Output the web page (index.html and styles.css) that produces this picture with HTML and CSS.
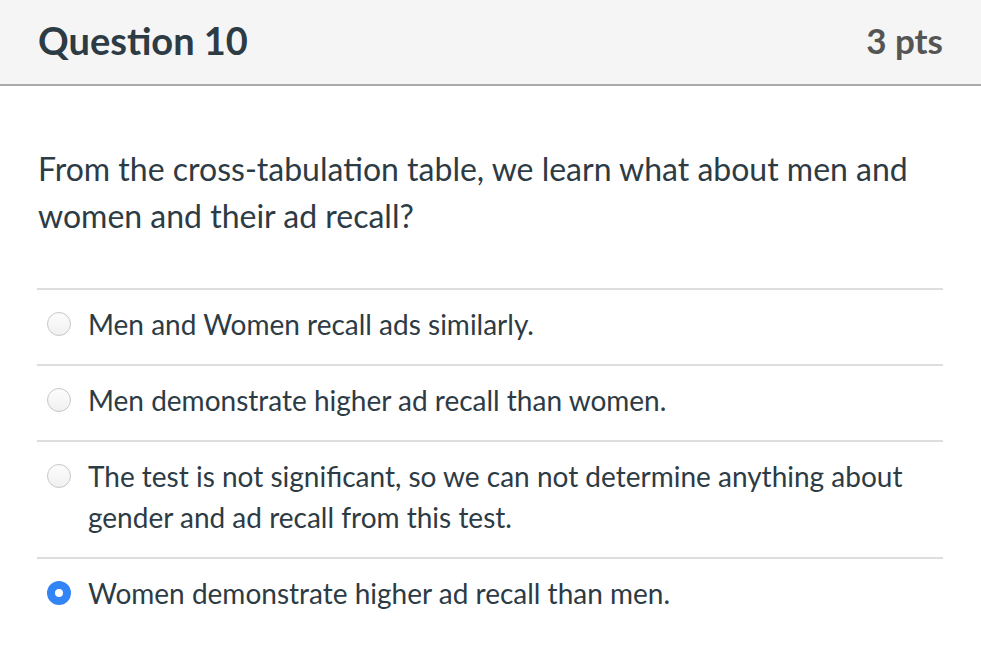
FILE: index.html
```html
<!DOCTYPE html>
<html>
<head>
<meta charset="utf-8">
<link rel="stylesheet" href="styles.css">
</head>
<body>
<div class="question">
  <div class="header">
    <h2 class="title">Question 10</h2>
    <div class="pts">3 pts</div>
  </div>
  <div class="content">
    <p class="text">From the cross-tabulation table, we learn what about men and women and their ad recall?</p>
    <div class="answers">
      <div class="answer"><span class="radio"></span><span class="label">Men and Women recall ads similarly.</span></div>
      <div class="answer"><span class="radio"></span><span class="label">Men demonstrate higher ad recall than women.</span></div>
      <div class="answer"><span class="radio"></span><span class="label">The test is not significant, so we can not determine anything about gender and ad recall from this test.</span></div>
      <div class="answer"><span class="radio checked"></span><span class="label">Women demonstrate higher ad recall than men.</span></div>
    </div>
  </div>
</div>
</body>
</html>
```
FILE: styles.css
```css
* { box-sizing: border-box; }
html, body { margin: 0; padding: 0; background: #fff; }
body { font-family: Lato, "Open Sans", sans-serif; color: #2d3b45; width: 981px; height: 658px; overflow: hidden; }
.header {
  display: flex;
  justify-content: space-between;
  align-items: center;
  height: 86px;
  padding: 0 38px 4px 38px;
  background: #f5f5f5;
  border-bottom: 2px solid #aaaaaa;
}
.title { margin: 0; font-size: 38px; font-weight: 700; color: #2d3b45; }
.pts { font-size: 35px; font-weight: 700; color: #555; }
.content { padding: 59px 38px 0 37px; }
.text { margin: 0 0 49px 1px; font-size: 32px; line-height: 47px; }
.answers { width: 906px; }
.answer {
  display: flex;
  align-items: flex-start;
  border-top: 2px solid #dddddd;
  padding: 14px 0 19px 0;
  font-size: 28px;
  line-height: 41px;
}
.radio {
  flex: none;
  width: 24px;
  height: 24px;
  margin: 8px 17px 0 10px;
  border-radius: 50%;
  border: 1px solid #c7c7c7;
  background: linear-gradient(#fdfdfd, #f0f0f0);
}
.radio.checked {
  border: 8px solid #3384f5;
  background: #fff;
}
.label { flex: 1; }
```
